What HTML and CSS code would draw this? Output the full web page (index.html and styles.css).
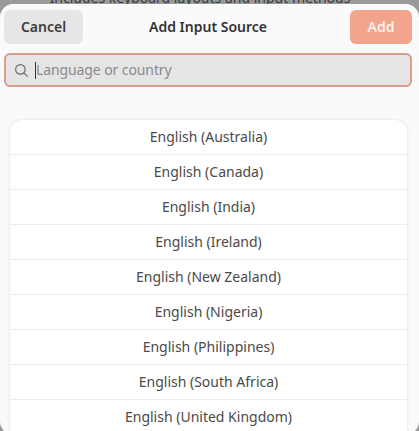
FILE: index.html
```html
<!DOCTYPE html>
<html lang="en">
<head>
<meta charset="utf-8">
<title>Add Input Source</title>
<link rel="stylesheet" href="styles.css">
</head>
<body>
<div class="backdrop"><p class="behind">Includes keyboard layouts and input methods</p></div>
<main class="dialog">
  <header class="header">
    <button class="btn cancel">Cancel</button>
    <h1 class="title">Add Input Source</h1>
    <button class="btn add">Add</button>
  </header>
  <div class="search">
    <svg class="search-icon" width="15" height="15" viewBox="0 0 16 16" fill="none">
      <circle cx="6.8" cy="6.8" r="5.1" stroke="#6a6a6a" stroke-width="1.2"/>
      <path d="M10.6 10.6 14.6 14.6" stroke="#6a6a6a" stroke-width="1.3"/>
    </svg>
    <span class="caret"></span>
    <span class="placeholder">Language or country</span>
  </div>
  <ul class="list">
    <li class="row">English (Australia)</li>
    <li class="row">English (Canada)</li>
    <li class="row">English (India)</li>
    <li class="row">English (Ireland)</li>
    <li class="row">English (New Zealand)</li>
    <li class="row">English (Nigeria)</li>
    <li class="row">English (Philippines)</li>
    <li class="row">English (South Africa)</li>
    <li class="row">English (United Kingdom)</li>
  </ul>
</main>
</body>
</html>
```

FILE: styles.css
```css
* { box-sizing: border-box; }
html, body { margin: 0; height: 100%; }
body {
  width: 419px;
  height: 431px;
  overflow: hidden;
  position: relative;
  background: #9a9a9a;
  font-family: "Noto Sans", "Open Sans", sans-serif;
  color: #3d3d3d;
}
.backdrop { position: absolute; inset: 0; }
.behind {
  margin: 0;
  position: absolute;
  left: 0;
  width: 400px;
  top: -12px;
  text-align: center;
  font-size: 14px;
  line-height: 20px;
  color: #3a3a3a;
}
.dialog {
  position: absolute;
  top: 4px;
  left: 0;
  width: 419px;
  height: 431px;
  background: #fafafa;
  border-radius: 14px;
  box-shadow: inset 0 1px 0 #fff;
  padding: 6px 0 0;
  display: flex;
  flex-direction: column;
  overflow: hidden;
}
.header {
  flex: none;
  display: grid;
  grid-template-columns: 1fr auto 1fr;
  align-items: center;
  padding: 0 7px 0 4px;
  height: 34px;
}
.btn {
  border: 0;
  height: 34px;
  border-radius: 6px;
  font: 600 14px/20px "Noto Sans", "Open Sans", sans-serif;
  padding: 0;
}
.cancel { width: 79px; background: #e6e6e6; color: #3d3d3d; }
.add { width: 62px; background: #f3a48c; color: #fdf1ec; justify-self: end; }
.title { margin: 0; font-size: 14px; line-height: 20px; font-weight: 600; color: #333; }
.search {
  flex: none;
  margin: 9px 7px 0 4px;
  height: 34px;
  border: 2px solid #d99d8b;
  border-radius: 6px;
  background: #e5e5e5;
  display: flex;
  align-items: center;
  padding-left: 8px;
}
.search-icon { flex: none; }
.caret { width: 1px; height: 17px; background: #333; margin-left: 6px; flex: none; }
.placeholder { font-size: 14px; line-height: 20px; color: #8a8a8a; letter-spacing: -0.1px; }
.list {
  flex: none;
  list-style: none;
  margin: 33px 12px 0 10px;
  padding: 0;
  background: #fff;
  border-radius: 12px 12px 0 0;
  box-shadow: 0 0 3px rgba(0,0,0,.12);
}
.row {
  height: 35px;
  display: flex;
  align-items: center;
  justify-content: center;
  font-size: 14px;
  line-height: 20px;
  color: #4a4a4a;
  border-top: 1px solid #ececec;
}
.row:first-child { height: 34px; border-top: 0; }
```
